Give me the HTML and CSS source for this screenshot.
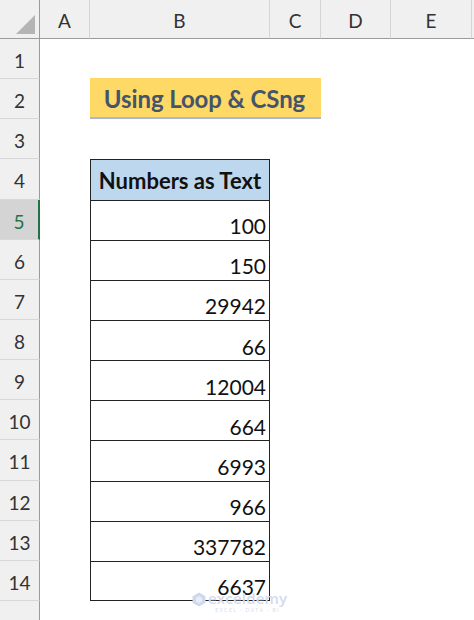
FILE: index.html
```html
<!DOCTYPE html>
<html>
<head>
<meta charset="utf-8">
<link rel="stylesheet" href="styles.css">
</head>
<body>
<div class="sheet">
  <div class="corner"><span class="tri"></span></div>
  <div class="ch">A</div>
  <div class="ch">B</div>
  <div class="ch">C</div>
  <div class="ch">D</div>
  <div class="ch">E</div>
  <div class="ch last"></div>

  <div class="rh">1</div><div class="c"></div><div class="c"></div><div class="c"></div><div class="c"></div><div class="c"></div><div class="c"></div>
  <div class="rh">2</div><div class="c"></div><div class="c title">Using Loop &amp; CSng</div><div class="c"></div><div class="c"></div><div class="c"></div>
  <div class="rh">3</div><div class="c"></div><div class="c"></div><div class="c"></div><div class="c"></div><div class="c"></div><div class="c"></div>
  <div class="rh">4</div><div class="c"></div><div class="c tb th">Numbers as Text</div><div class="c"></div><div class="c"></div><div class="c"></div><div class="c"></div>
  <div class="rh sel">5</div><div class="c"></div><div class="c tb num">100</div><div class="c"></div><div class="c"></div><div class="c"></div><div class="c"></div>
  <div class="rh">6</div><div class="c"></div><div class="c tb num">150</div><div class="c"></div><div class="c"></div><div class="c"></div><div class="c"></div>
  <div class="rh">7</div><div class="c"></div><div class="c tb num">29942</div><div class="c"></div><div class="c"></div><div class="c"></div><div class="c"></div>
  <div class="rh">8</div><div class="c"></div><div class="c tb num">66</div><div class="c"></div><div class="c"></div><div class="c"></div><div class="c"></div>
  <div class="rh">9</div><div class="c"></div><div class="c tb num">12004</div><div class="c"></div><div class="c"></div><div class="c"></div><div class="c"></div>
  <div class="rh">10</div><div class="c"></div><div class="c tb num">664</div><div class="c"></div><div class="c"></div><div class="c"></div><div class="c"></div>
  <div class="rh">11</div><div class="c"></div><div class="c tb num">6993</div><div class="c"></div><div class="c"></div><div class="c"></div><div class="c"></div>
  <div class="rh">12</div><div class="c"></div><div class="c tb num">966</div><div class="c"></div><div class="c"></div><div class="c"></div><div class="c"></div>
  <div class="rh">13</div><div class="c"></div><div class="c tb num">337782</div><div class="c"></div><div class="c"></div><div class="c"></div><div class="c"></div>
  <div class="rh">14</div><div class="c"></div><div class="c tb num lastrow">6637</div><div class="c"></div><div class="c"></div><div class="c"></div><div class="c"></div>
  <div class="rh"></div><div class="c"></div><div class="c"></div><div class="c"></div><div class="c"></div><div class="c"></div><div class="c"></div>

  <div class="wm">
    <svg class="wm-icon" width="14" height="15" viewBox="0 0 14 15"><path d="M7 0.5 L13.5 4.2 V10.8 L7 14.5 L0.5 10.8 V4.2 Z" fill="#cfd8ec"/><path d="M4 6 L7 4 L10 6 V9.5 L7 11.5 L4 9.5 Z" fill="#e8edf6"/></svg>
    <div class="wm-text">
      <span class="wm-name">exceldemy</span>
      <span class="wm-sub">EXCEL · DATA · BI</span>
    </div>
  </div>
</div>
</body>
</html>
```
FILE: styles.css
```css
html, body {
  margin: 0;
  padding: 0;
  background: #ffffff;
}
.sheet {
  position: relative;
  display: grid;
  grid-template-columns: 40px 50px 180px 51px 70px 81px 1fr;
  grid-template-rows: 39px repeat(14, 40.15px) 30px;
  width: 474px;
  height: 620px;
  overflow: hidden;
  font-family: Lato, "Open Sans", sans-serif;
  color: #111;
}
.corner {
  position: relative;
  background: #f0f0f0;
  border-right: 1px solid #9b9b9b;
  border-bottom: 1px solid #9b9b9b;
  box-sizing: border-box;
}
.tri {
  position: absolute;
  right: 4px;
  bottom: 4px;
  width: 0;
  height: 0;
  border-left: 19px solid transparent;
  border-bottom: 19px solid #b4b4b4;
}
.ch {
  background: #f0f0f0;
  border-right: 1px solid #d4d4d4;
  border-bottom: 1px solid #9b9b9b;
  box-sizing: border-box;
  display: flex;
  align-items: center;
  justify-content: center;
  font-size: 19px;
  color: #333;
  padding-top: 2px;
}
.ch.last { border-right: none; }
.rh {
  background: #f0f0f0;
  border-bottom: 1px solid #d8d8d8;
  border-right: 1px solid #9b9b9b;
  box-sizing: border-box;
  display: flex;
  align-items: center;
  justify-content: center;
  font-size: 19px;
  color: #333;
  padding-top: 4px;
}
.rh.sel {
  background: #d4d4d4;
  color: #217346;
  border-right: 2px solid #217346;
}
.c {
  background: #fff;
}
.title {
  grid-column: span 2;
  background: #ffd966;
  border-bottom: 2px solid #a9b6da;
  margin-top: -1px;
  box-sizing: border-box;
  display: flex;
  align-items: center;
  justify-content: center;
  font-weight: 700;
  font-size: 24px;
  letter-spacing: -0.1px;
  color: #44546a;
  padding-top: 2px;
  padding-right: 2px;
}
.tb {
  border-left: 1px solid #222;
  border-right: 1px solid #222;
  border-top: 1px solid #222;
  box-sizing: border-box;
  display: flex;
  align-items: center;
  font-size: 21px;
  color: #111;
}
.th {
  background: #bdd7ee;
  justify-content: center;
  font-weight: 700;
  font-size: 22px;
  padding-top: 2px;
}
.num {
  justify-content: flex-end;
  padding-right: 3px;
  padding-top: 11px;
}
.lastrow {
  border-bottom: 1px solid #222;
}
.wm {
  position: absolute;
  left: 192px;
  top: 592px;
  display: flex;
  align-items: flex-start;
  gap: 2px;
}
.wm-icon { margin-top: 0; }
.wm-text {
  display: flex;
  flex-direction: column;
  align-items: center;
}
.wm-name {
  font-family: "Open Sans", sans-serif;
  font-size: 15px;
  line-height: 13px;
  font-weight: 600;
  color: #d3dbee;
  letter-spacing: 0.2px;
}
.wm-sub {
  font-size: 5px;
  line-height: 6px;
  color: #d8deec;
  letter-spacing: 1.5px;
  margin-top: 2px;
}
```
